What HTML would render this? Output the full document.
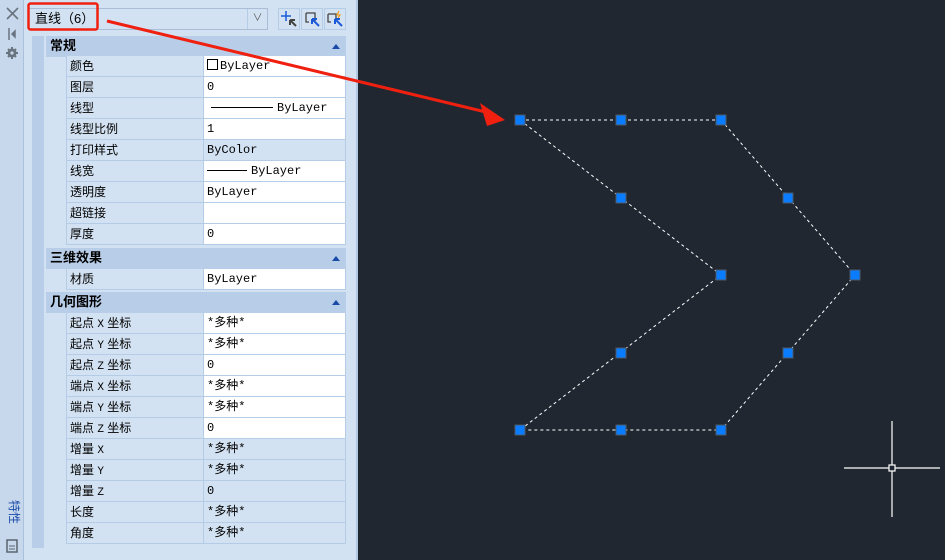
<!DOCTYPE html>
<html><head><meta charset="utf-8"><style>
*{margin:0;padding:0;box-sizing:border-box}
body{width:945px;height:560px;background:#212730;position:relative;overflow:hidden;font-family:"Liberation Sans","Noto Sans CJK SC",sans-serif;font-size:12px;color:#000}
#strip{position:absolute;left:0;top:0;width:24px;height:560px;background:#c7d8ec;border-right:1px solid #a9c1dd}
#panel{position:absolute;left:24px;top:0;width:334px;height:560px;background:#d3e2f2;border-right:2px solid #b2c8e2}
#gut{position:absolute;left:32px;top:36px;width:12px;height:512px;background:#b8cee8}
.row{position:absolute;left:46px;width:300px;height:21px;}
.hdr{background:#b7cde8;font-weight:bold;font-size:13px;padding-left:4px;line-height:20px}
.hdr::after{content:"";position:absolute;right:6px;top:8px;border-left:4px solid transparent;border-right:4px solid transparent;border-bottom:5px solid #1a4aa8}
.l{position:absolute;left:20px;top:0;width:138px;height:21px;border-bottom:1px solid #b4cce6;border-right:1px solid #b4cce6;border-left:1px solid #b4cce6;background:#d3e2f2;padding-left:3px;line-height:20px;font-size:12px}
.l i{font-style:normal;font-family:"Liberation Mono",monospace;font-size:11px}
.v{position:absolute;left:158px;top:0;width:142px;height:21px;border-bottom:1px solid #b4cce6;border-right:1px solid #b4cce6;background:#fff;padding-left:3px;line-height:21px;font-family:"Liberation Mono","Noto Sans CJK SC",monospace;font-size:12px}
.v.g{background:#d3e2f2}
.btn{position:absolute;top:8px;width:22px;height:22px;border:1px solid #b4cce6;background:#d3e2f2}
</style></head><body>
<div id="strip">
<svg width="24" height="560" style="position:absolute;left:0;top:0">
<path d="M7 8L18 19M18 8L7 19" stroke="#6a7480" stroke-width="1.6"/>
<path d="M9 28V40M12 34L15 31V37Z" stroke="#6a7480" stroke-width="1.5" fill="#6a7480"/>
<path d="M12 47V59M6 53H18M8 49L16 57M16 49L8 57" stroke="#6a7480" stroke-width="2"/>
<circle cx="12" cy="53" r="4.5" fill="#6a7480"/><circle cx="12" cy="53" r="1.6" fill="#c7d8ec"/>
<rect x="7" y="540" width="10" height="12" fill="none" stroke="#5a6470" stroke-width="1.5"/><path d="M9 546H15M9 549H15" stroke="#5a6470"/>
</svg>
<div style="position:absolute;left:5px;top:500px;width:16px;color:#1a4aa8;font-size:12px;line-height:14px;writing-mode:vertical-rl;text-orientation:sideways">特性</div>
</div>
<div id="panel">
<div style="position:absolute;left:4px;top:8px;width:240px;height:22px;border:1px solid #a9bed6;background:#d3e2f2;padding-left:6px;line-height:20px;font-size:13px">直线（6）<div style="position:absolute;right:0;top:0;width:20px;height:20px;border-left:1px solid #b4cce6;text-align:center;color:#555;font-size:10px">∨</div></div>
<div class="btn" style="left:254px"><svg width="20" height="20"><path d="M2 7H12M7 2V12" stroke="#1a5ad8" stroke-width="1.5"/><path d="M11 11L17 17M11 11V16M11 11H16" stroke="#444" stroke-width="2"/></svg></div>
<div class="btn" style="left:277px"><svg width="20" height="20"><path d="M4 4H13V12M4 4V13H7" stroke="#444" fill="none" stroke-width="1.3"/><path d="M10 10L17 17M10 10V15M10 10H15" stroke="#1a5ad8" stroke-width="2"/></svg></div>
<div class="btn" style="left:300px"><svg width="20" height="20"><path d="M3 5H11V12M3 5V13H6" stroke="#444" fill="none" stroke-width="1.3"/><path d="M14 2L12 6H15L13 9" stroke="#f0a020" fill="none" stroke-width="1.3"/><path d="M10 10L17 17M10 10V15M10 10H15" stroke="#1a5ad8" stroke-width="2"/></svg></div>
</div>
<div id="gut"></div>
<div class="row hdr" style="top:36px">常规</div>
<div class="row" style="top:56px"><div class="l">颜色</div><div class="v"><span style="display:inline-block;width:11px;height:11px;border:1px solid #000;vertical-align:-1px;margin-right:2px"></span>ByLayer</div></div>
<div class="row" style="top:77px"><div class="l">图层</div><div class="v">0</div></div>
<div class="row" style="top:98px"><div class="l">线型</div><div class="v"><span style="display:inline-block;width:62px;border-top:1px solid #000;vertical-align:3px;margin:0 4px 0 4px"></span>ByLayer</div></div>
<div class="row" style="top:119px"><div class="l">线型比例</div><div class="v">1</div></div>
<div class="row" style="top:140px"><div class="l">打印样式</div><div class="v g">ByColor</div></div>
<div class="row" style="top:161px"><div class="l">线宽</div><div class="v"><span style="display:inline-block;width:40px;border-top:1px solid #000;vertical-align:3px;margin-right:4px"></span>ByLayer</div></div>
<div class="row" style="top:182px"><div class="l">透明度</div><div class="v">ByLayer</div></div>
<div class="row" style="top:203px"><div class="l">超链接</div><div class="v"></div></div>
<div class="row" style="top:224px"><div class="l">厚度</div><div class="v">0</div></div>
<div class="row hdr" style="top:248px">三维效果</div>
<div class="row" style="top:269px"><div class="l">材质</div><div class="v">ByLayer</div></div>
<div class="row hdr" style="top:292px">几何图形</div>
<div class="row" style="top:313px"><div class="l">起点 <i>X</i> 坐标</div><div class="v">*多种*</div></div>
<div class="row" style="top:334px"><div class="l">起点 <i>Y</i> 坐标</div><div class="v">*多种*</div></div>
<div class="row" style="top:355px"><div class="l">起点 <i>Z</i> 坐标</div><div class="v">0</div></div>
<div class="row" style="top:376px"><div class="l">端点 <i>X</i> 坐标</div><div class="v">*多种*</div></div>
<div class="row" style="top:397px"><div class="l">端点 <i>Y</i> 坐标</div><div class="v">*多种*</div></div>
<div class="row" style="top:418px"><div class="l">端点 <i>Z</i> 坐标</div><div class="v">0</div></div>
<div class="row" style="top:439px"><div class="l">增量 <i>X</i></div><div class="v g">*多种*</div></div>
<div class="row" style="top:460px"><div class="l">增量 <i>Y</i></div><div class="v g">*多种*</div></div>
<div class="row" style="top:481px"><div class="l">增量 <i>Z</i></div><div class="v g">0</div></div>
<div class="row" style="top:502px"><div class="l">长度</div><div class="v g">*多种*</div></div>
<div class="row" style="top:523px"><div class="l">角度</div><div class="v g">*多种*</div></div>
<svg width="945" height="560" style="position:absolute;left:0;top:0">
<g stroke="#fff" stroke-width="1" stroke-dasharray="3,3" fill="none">
<path d="M520 120H721M520 120L721 275L520 430H721M721 120L855 275L721 430"/>
</g>
<g fill="#0a7cff" stroke="#4a5a6a" stroke-width="1">
<rect x="515" y="115" width="10" height="10"/><rect x="616" y="115" width="10" height="10"/><rect x="716" y="115" width="10" height="10"/>
<rect x="616" y="193" width="10" height="10"/><rect x="716" y="270" width="10" height="10"/><rect x="616" y="348" width="10" height="10"/>
<rect x="515" y="425" width="10" height="10"/><rect x="616" y="425" width="10" height="10"/><rect x="716" y="425" width="10" height="10"/>
<rect x="783" y="193" width="10" height="10"/><rect x="850" y="270" width="10" height="10"/><rect x="783" y="348" width="10" height="10"/>
</g>
<g stroke="#fff" stroke-width="1.2" fill="none">
<path d="M844 468H940M892 421V517"/><rect x="889" y="465" width="6" height="6" fill="#212730"/>
</g>
<rect x="28.5" y="3.5" width="69" height="26" fill="none" stroke="#f02010" stroke-width="2.5" rx="2"/>
<path d="M107 21L490 113" stroke="#f02010" stroke-width="3"/>
<path d="M505 120L480 103L487 126Z" fill="#f02010"/>
</svg>
</body></html>
